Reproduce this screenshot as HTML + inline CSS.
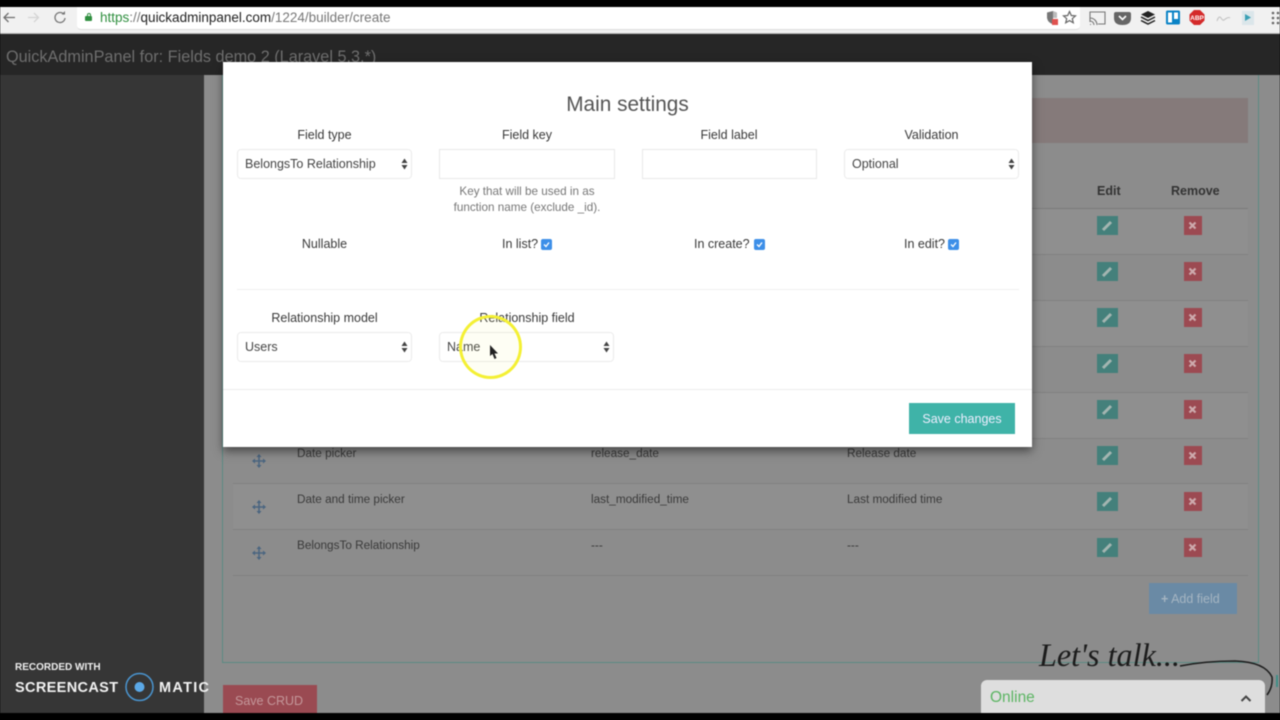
<!DOCTYPE html>
<html><head><meta charset="utf-8"><style>
html,body{margin:0;padding:0;width:1280px;height:720px;overflow:hidden;background:#000}
body{font-family:"Liberation Sans",sans-serif;position:relative}
#w{position:absolute;left:0;top:0;width:1280px;height:720px;overflow:hidden;filter:blur(.5px)}
.a{position:absolute}
.t{position:absolute;white-space:nowrap;line-height:16px}
.c{position:absolute;text-align:center;white-space:nowrap;font-size:12.5px;line-height:16px;color:#3a3a3a}
.r{position:absolute;left:233px;width:1015px;height:45px;border-bottom:1px solid #808080}
.g{font-size:11.75px;color:#3a3a3a}
.e{position:absolute;left:1097px;width:21px;height:19px;background:#44807b}
.x{position:absolute;left:1184px;width:18px;height:19px;background:#9c4a52}
.sel{position:absolute;width:173px;height:28px;border:1px solid #ebebeb;border-radius:4px;background:#fff}
.sel span{position:absolute;left:7px;top:6px;font-size:12.5px;line-height:16px;color:#444;white-space:nowrap}
.inp{position:absolute;height:28px;border:1px solid #e8e8e8;background:#fff}
.cb{position:absolute;width:11px;height:11px;background:#3d8fe8;border-radius:2px}
</style></head><body><div id="w">
<div class="a" style="left:0;top:7px;width:1280px;height:27px;background:#f1f1f1"></div>
<div class="a" style="left:77px;top:7px;width:1003px;height:22px;background:#fff;border-radius:0 0 4px 4px;border-bottom:1px solid #ddd"></div>
<div class="a" style="left:0;top:33px;width:1280px;height:1px;background:#b5b5b5"></div>
<svg class="a" style="left:0;top:7px" width="80" height="22" viewBox="0 0 80 22" fill="none"><path d="M15 10.5H4M8.500 6L4 10.5 8.500 15" stroke="#6e6e6e" stroke-width="1.300"/><path d="M28 10.5H38M34 6L38.500 10.5 34 15" stroke="#d4d4d4" stroke-width="1.300"/><path d="M64 7.500A5 5 0 1 0 65 11" stroke="#777" stroke-width="1.300"/><path d="M61.500 7.500H65V4z" fill="#777"/></svg>
<div class="a" style="left:85px;top:16px;width:7px;height:5px;background:#2f8f3f;border-radius:1px"></div>
<div class="a" style="left:86.500px;top:13px;width:2.500px;height:3px;border:1px solid #2f8f3f;border-bottom:0;border-radius:2px 2px 0 0"></div>
<div class="t" style="left:100px;top:10px;font-size:13.5px;color:#777"><span style="color:#2f8f3f">https</span>://<span style="color:#222">quickadminpanel.com</span>/1224/builder/create</div>
<svg class="a" style="left:1040px;top:7px" width="240" height="24" viewBox="0 0 240 24">
<path d="M7 5.500L13 4V17Q8 16 7 11z" fill="#777"/><path d="M13 4L17 5.500V11H13z" fill="#bbb"/><rect x="12" y="12" width="6" height="6" fill="#e0524f"/>
<path d="M29.500 4.500L31.300 8.500 35.500 8.900 32.300 11.700 33.300 15.800 29.500 13.600 25.700 15.800 26.700 11.700 23.500 8.900 27.700 8.500z" fill="none" stroke="#666" stroke-width="1.200"/>
<path d="M50 15V5H65V17H58M50 17.500h1M50 14a4 4 0 0 1 4 4M50 11a7 7 0 0 1 7 7" fill="none" stroke="#777" stroke-width="1.100"/>
<path d="M76 5h13q2 0 2 2v4q0 7-8.500 7T74 11V7q0-2 2-2z" fill="#666"/><path d="M79 9l3.500 3.500L86 9" fill="none" stroke="#fff" stroke-width="1.600"/>
<path d="M108 4l7 3.500-7 3.500-7-3.500z" fill="#222"/><path d="M101 10l7 3.500 7-3.500M101 13.500l7 3.500 7-3.500" fill="none" stroke="#222" stroke-width="1.500"/>
<rect x="126" y="3.500" width="14" height="14" rx="1.500" fill="#0a83c6"/><rect x="128" y="5.500" width="4" height="10" fill="#fff"/><rect x="134" y="5.500" width="4" height="6.500" fill="#fff"/>
<path d="M154 3h6l4.500 4.500v6L160 18h-6l-4.500-4.500v-6z" fill="#d42a2a"/><text x="157" y="13" font-size="6.5" font-weight="700" fill="#fff" text-anchor="middle" font-family="Liberation Sans">ABP</text>
<path d="M177 14q2-6 4-3t3 2 3-2 3 0" fill="none" stroke="#c4c4c4" stroke-width="1.100"/>
<rect x="202" y="4" width="12" height="14" fill="#dbe6ea"/><path d="M205 7l6 3.500-6 3.500z" fill="#3aa0b5"/>
<g fill="#666"><circle cx="233" cy="6" r="1.300"/><circle cx="238" cy="6" r="1.300"/><circle cx="233" cy="11" r="1.300"/><circle cx="238" cy="11" r="1.300"/><circle cx="233" cy="16" r="1.300"/><circle cx="238" cy="16" r="1.300"/></g></svg>

<div class="a" style="left:0;top:34px;width:1280px;height:41px;background:#262626"></div>
<div class="t" style="left:6px;top:48px;font-size:16.25px;line-height:18px;color:#6e6e6e">QuickAdminPanel for: Fields demo 2 (Laravel 5.3.*)</div>
<div class="a" style="left:0;top:75px;width:204px;height:638px;background:#363636"></div>
<div class="a" style="left:204px;top:75px;width:1076px;height:638px;background:#8c8c8c"></div>
<div class="a" style="left:222px;top:75px;width:1035px;height:587px;border-right:1px solid #5a8a83;border-bottom:1px solid #5a8a83;border-left:1px solid #5a8a83"></div>
<div class="a" style="left:233px;top:98px;width:1015px;height:45px;background:#857a7a"></div>

<div class="t" style="left:1097px;top:183px;font-size:12.5px;font-weight:700;color:#333">Edit</div>
<div class="t" style="left:1171px;top:183px;font-size:12.5px;font-weight:700;color:#333">Remove</div>
<div class="a" style="left:233px;top:207.500px;width:1015px;height:1.500px;background:#7b7b7b"></div>

<div class="r" style="top:209px;background:#8f8f8f"></div>
<div class="r" style="top:255px"></div>
<div class="r" style="top:301px;background:#8f8f8f"></div>
<div class="r" style="top:347px"></div>
<div class="r" style="top:393px;background:#8f8f8f"></div>
<div class="r" style="top:438px"></div>
<div class="r" style="top:484px;background:#8f8f8f"></div>
<div class="r" style="top:530px"></div>

<div class="t g" style="left:297px;top:446px">Date picker</div>
<div class="t g" style="left:591px;top:446px">release_date</div>
<div class="t g" style="left:847px;top:446px">Release date</div>
<div class="t g" style="left:297px;top:492px">Date and time picker</div>
<div class="t g" style="left:591px;top:492px">last_modified_time</div>
<div class="t g" style="left:847px;top:492px">Last modified time</div>
<div class="t g" style="left:297px;top:538px">BelongsTo Relationship</div>
<div class="t g" style="left:591px;top:538px">---</div>
<div class="t g" style="left:847px;top:538px">---</div>

<svg class="a" style="left:252px;top:454px" width="14" height="106" viewBox="0 0 14 106" fill="none">
<g stroke="#4a6580" stroke-width="1.500"><path d="M7 1V13M1 7H13"/><path d="M7 47V59M1 53H13"/><path d="M7 93V105M1 99H13"/></g>
<g fill="#4a6580"><path d="M4.500 3L7 0 9.500 3zM4.500 11L7 14 9.500 11zM3 4.500L0 7 3 9.500zM11 4.500L14 7 11 9.500z"/><path d="M4.500 49L7 46 9.500 49zM4.500 57L7 60 9.500 57zM3 50.500L0 53 3 55.500zM11 50.500L14 53 11 55.500z"/><path d="M4.500 95L7 92 9.500 95zM4.500 103L7 106 9.500 103zM3 96.500L0 99 3 101.500zM11 96.500L14 99 11 101.500z"/></g></svg>

<div class="e" style="top:216px"></div><div class="e" style="top:262px"></div><div class="e" style="top:308px"></div><div class="e" style="top:354px"></div><div class="e" style="top:400px"></div><div class="e" style="top:446px"></div><div class="e" style="top:492px"></div><div class="e" style="top:538px"></div>
<div class="x" style="top:216px"></div><div class="x" style="top:262px"></div><div class="x" style="top:308px"></div><div class="x" style="top:354px"></div><div class="x" style="top:400px"></div><div class="x" style="top:446px"></div><div class="x" style="top:492px"></div><div class="x" style="top:538px"></div>
<svg class="a" style="left:1097px;top:216px" width="110" height="345" viewBox="0 0 110 345" fill="none">
<g stroke="#a3b5b1" stroke-width="3"><path d="M6 14l8-8"/><path d="M6 60l8-8"/><path d="M6 106l8-8"/><path d="M6 152l8-8"/><path d="M6 198l8-8"/><path d="M6 244l8-8"/><path d="M6 290l8-8"/><path d="M6 336l8-8"/></g>
<g stroke="#cdaaad" stroke-width="2.200"><path d="M92.500 6.500l6 6m0-6l-6 6"/><path d="M92.500 52.500l6 6m0-6l-6 6"/><path d="M92.500 98.500l6 6m0-6l-6 6"/><path d="M92.500 144.500l6 6m0-6l-6 6"/><path d="M92.500 190.500l6 6m0-6l-6 6"/><path d="M92.500 236.500l6 6m0-6l-6 6"/><path d="M92.500 282.500l6 6m0-6l-6 6"/><path d="M92.500 328.500l6 6m0-6l-6 6"/></g></svg>

<div class="a" style="left:1149px;top:583px;width:88px;height:31px;background:#6a8aa5"></div>
<div class="t" style="left:1161px;top:591px;font-size:12.5px;color:#a5b5c2"><b>+</b> Add field</div>
<div class="a" style="left:223px;top:685px;width:94px;height:28px;background:#9a4a52"></div>
<div class="t" style="left:235px;top:693px;font-size:12.5px;color:#c4979a">Save CRUD</div>

<!-- Modal -->
<div class="a" style="left:223px;top:62px;width:809px;height:385px;background:#fff;box-shadow:0 4px 9px rgba(0,0,0,.5)"></div>
<div class="c" style="left:223px;top:93px;width:809px;font-size:20.8px;line-height:24px;color:#555">Main settings</div>
<div class="c" style="left:237px;top:127px;width:175px">Field type</div>
<div class="c" style="left:439px;top:127px;width:176px">Field key</div>
<div class="c" style="left:642px;top:127px;width:174px">Field label</div>
<div class="c" style="left:844px;top:127px;width:175px">Validation</div>
<div class="sel" style="left:237px;top:149px"><span>BelongsTo Relationship</span></div>
<div class="inp" style="left:439px;top:149px;width:174px"></div>
<div class="inp" style="left:642px;top:149px;width:173px"></div>
<div class="sel" style="left:844px;top:149px"><span>Optional</span></div>
<div class="c" style="left:439px;top:184px;width:176px;font-size:11.7px;color:#777">Key that will be used in as</div>
<div class="c" style="left:439px;top:200px;width:176px;font-size:11.7px;color:#777">function name (exclude _id).</div>
<div class="c" style="left:237px;top:236px;width:175px">Nullable</div>
<div class="t" style="left:502px;top:236px;font-size:12.5px;color:#3a3a3a">In list?</div>
<div class="t" style="left:694px;top:236px;font-size:12.5px;color:#3a3a3a">In create?</div>
<div class="t" style="left:904px;top:236px;font-size:12.5px;color:#3a3a3a">In edit?</div>
<div class="cb" style="left:541px;top:239px"></div><div class="cb" style="left:754px;top:239px"></div><div class="cb" style="left:948px;top:239px"></div>
<svg class="a" style="left:541px;top:239px" width="420" height="11" fill="none" stroke="#fff" stroke-width="1.300"><path d="M3 5.500l2 2 3-4"/><path d="M216 5.500l2 2 3-4"/><path d="M410 5.500l2 2 3-4"/></svg>
<div class="a" style="left:237px;top:289px;width:782px;height:1px;background:#f0f0f0"></div>
<div class="c" style="left:237px;top:310px;width:175px">Relationship model</div>
<div class="c" style="left:439px;top:310px;width:176px">Relationship field</div>
<div class="sel" style="left:237px;top:332px"><span>Users</span></div>
<div class="sel" style="left:439px;top:332px"><span>Name</span></div>
<svg class="a" style="left:400px;top:157px" width="10" height="14"><path d="M1.500 6L4.500 1.500 7.500 6zM1.500 8L4.500 12.500 7.500 8z" fill="#444"/></svg>
<svg class="a" style="left:1007px;top:157px" width="10" height="14"><path d="M1.500 6L4.500 1.500 7.500 6zM1.500 8L4.500 12.500 7.500 8z" fill="#444"/></svg>
<svg class="a" style="left:400px;top:340px" width="10" height="14"><path d="M1.500 6L4.500 1.500 7.500 6zM1.500 8L4.500 12.500 7.500 8z" fill="#444"/></svg>
<svg class="a" style="left:602px;top:340px" width="10" height="14"><path d="M1.500 6L4.500 1.500 7.500 6zM1.500 8L4.500 12.500 7.500 8z" fill="#444"/></svg>
<div class="a" style="left:223px;top:389px;width:809px;height:1px;background:#ececec"></div>
<div class="a" style="left:909px;top:403px;width:106px;height:31px;background:#3fb3a8"></div>
<div class="t" style="left:909px;top:411px;width:106px;text-align:center;font-size:12.5px;color:#eef">Save changes</div>

<!-- Cursor highlight -->
<div class="a" style="left:459px;top:315px;width:57px;height:58px;border:3px solid #f4f034;border-radius:50%;background:rgba(245,245,120,.08)"></div>
<svg class="a" style="left:488px;top:344px" width="12" height="17"><path d="M2 1V12L4.500 10 6.500 15 8.500 14 6.500 9.500H10z" fill="#222"/></svg>

<!-- Watermark -->
<div class="t" style="left:15px;top:659.500px;font-size:10px;font-weight:700;color:#eee">RECORDED WITH</div>
<div class="t" style="left:15px;top:680px;font-size:14.5px;font-weight:700;color:#f2f2f2;letter-spacing:.35px">SCREENCAST</div>
<svg class="a" style="left:124px;top:672px" width="32" height="32" fill="none"><circle cx="15.500" cy="15" r="13.500" stroke="#4a95d0" stroke-width="1.500"/><circle cx="15.500" cy="15" r="5" fill="#5ba8e6"/></svg>
<div class="t" style="left:159px;top:680px;font-size:14.5px;font-weight:700;color:#f2f2f2;letter-spacing:1.300px">MATIC</div>

<!-- Let's talk -->
<svg class="a" style="left:1030px;top:625px" width="250" height="95" fill="none">
<text x="9" y="41" font-family="Liberation Serif,serif" font-style="italic" font-size="33" fill="#1c1c1c" textLength="141" lengthAdjust="spacingAndGlyphs">Let's talk...</text>
<path d="M150 41Q175 36 205 36Q235 37 242 52Q243 62 237 70" stroke="#1c1c1c" stroke-width="1.500"/></svg>
<div class="a" style="left:1276px;top:675px;width:2px;height:12px;background:#3f8f88"></div>
<div class="a" style="left:981px;top:680px;width:284px;height:33px;background:#dedede;border-radius:6px 6px 0 0"></div>
<div class="t" style="left:990px;top:689px;font-size:15.5px;line-height:18px;color:#5cb563">Online</div>
<svg class="a" style="left:1240px;top:694px" width="12" height="9" fill="none"><path d="M1.500 7L6 2.500 10.500 7" stroke="#444" stroke-width="2"/></svg>

<div class="a" style="left:0;top:0;width:1280px;height:7px;background:#000"></div>
<div class="a" style="left:0;top:713px;width:1280px;height:7px;background:#000"></div>
</div></body></html>
